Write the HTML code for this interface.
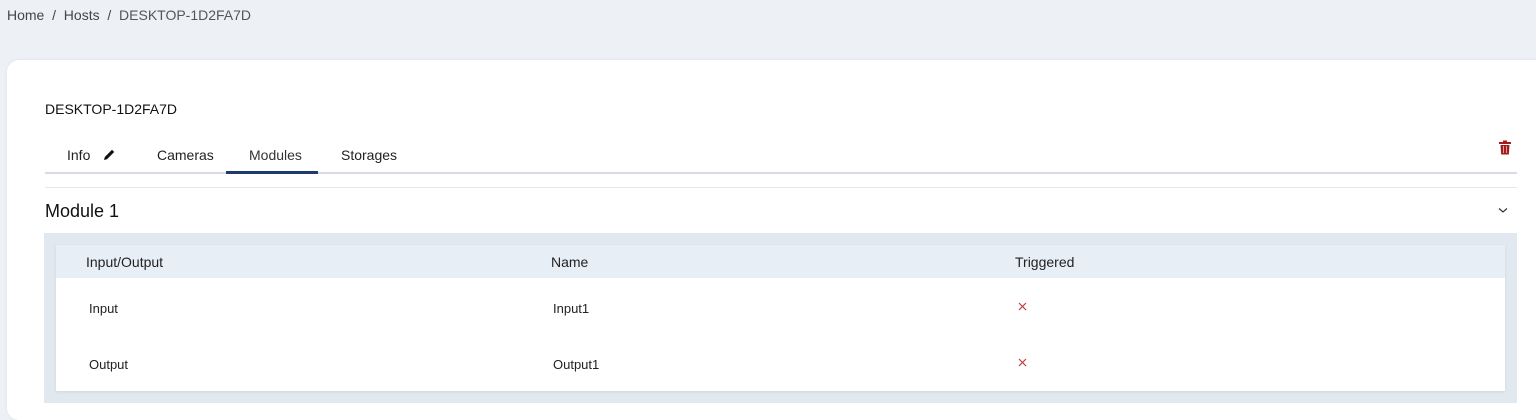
<!DOCTYPE html>
<html><head><style>
*{margin:0;padding:0;box-sizing:border-box}
body{width:1536px;height:411px;overflow:hidden;background:#edf1f6;font-family:"Liberation Sans",sans-serif;color:#222;position:relative}
.a{position:absolute;white-space:nowrap}
</style></head><body>
<div class="a" style="left:7px;top:7px;font-size:14px;color:#444">Home &nbsp;/&nbsp; Hosts &nbsp;/&nbsp; <span style="color:#555">DESKTOP-1D2FA7D</span></div>
<div class="a" style="left:7px;top:60px;width:1540px;height:360px;background:#fff;border-radius:12px;box-shadow:0 0 3px rgba(0,0,0,.08)"></div>
<div class="a" style="left:45px;top:101px;font-size:14px;color:#111">DESKTOP-1D2FA7D</div>
<div class="a" style="left:67px;top:147px;font-size:14px;color:#222">Info</div>
<svg class="a" style="left:103px;top:148px" width="13" height="13" viewBox="0 0 13 13"><path d="M1 12 L1.8 9 L9 1.8 L11.2 4 L4 11.2 Z" fill="#111"/></svg>
<div class="a" style="left:157px;top:147px;font-size:14px;color:#222">Cameras</div>
<div class="a" style="left:249px;top:147px;font-size:14px;color:#333">Modules</div>
<div class="a" style="left:341px;top:147px;font-size:14px;color:#222">Storages</div>
<div class="a" style="left:45px;top:172px;width:1472px;height:2px;background:#d6dbe4"></div>
<div class="a" style="left:226px;top:171px;width:92px;height:3px;background:#1e3a6e"></div>
<svg class="a" style="left:1498px;top:140px" width="14" height="15" viewBox="0 0 14 15"><rect x="1" y="2" width="12" height="2" fill="#a31b1b"/><rect x="5" y="0.5" width="4" height="2" fill="#a31b1b"/><path d="M2.5 5 H11.5 L10.8 14.5 H3.2 Z" fill="#a31b1b"/><rect x="5" y="6" width="1" height="7" fill="#fff" opacity=".6"/><rect x="8" y="6" width="1" height="7" fill="#fff" opacity=".6"/></svg>
<div class="a" style="left:45px;top:187px;width:1472px;height:1px;background:#e3e6ec"></div>
<div class="a" style="left:45px;top:201px;font-size:18px;color:#111">Module 1</div>
<svg class="a" style="left:1498px;top:207px" width="10" height="7" viewBox="0 0 10 7"><path d="M1 1.5 L5 5 L9 1.5" stroke="#333" stroke-width="1.2" fill="none"/></svg>
<div class="a" style="left:44px;top:233px;width:1473px;height:170px;background:#e1e8f0"></div>
<div class="a" style="left:56px;top:245px;width:1449px;height:146px;background:#fff;box-shadow:0 1px 3px rgba(0,0,0,.08)"></div>
<div class="a" style="left:56px;top:245px;width:1449px;height:33px;background:#e8eef6"></div>
<div class="a" style="left:86px;top:254px;font-size:14px;color:#222">Input/Output</div>
<div class="a" style="left:551px;top:254px;font-size:14px;color:#222">Name</div>
<div class="a" style="left:1015px;top:254px;font-size:14px;color:#222">Triggered</div>
<div class="a" style="left:89px;top:301px;font-size:13px;color:#222">Input</div>
<div class="a" style="left:553px;top:301px;font-size:13px;color:#222">Input1</div>
<div class="a" style="left:89px;top:357px;font-size:13px;color:#222">Output</div>
<div class="a" style="left:553px;top:357px;font-size:13px;color:#222">Output1</div>
<svg class="a" style="left:1018px;top:302px" width="9" height="9"><path d="M1 1L8 8M8 1L1 8" stroke="#c0393b" stroke-width="1.2"/></svg>
<svg class="a" style="left:1018px;top:358px" width="9" height="9"><path d="M1 1L8 8M8 1L1 8" stroke="#c0393b" stroke-width="1.2"/></svg>
</body></html>
